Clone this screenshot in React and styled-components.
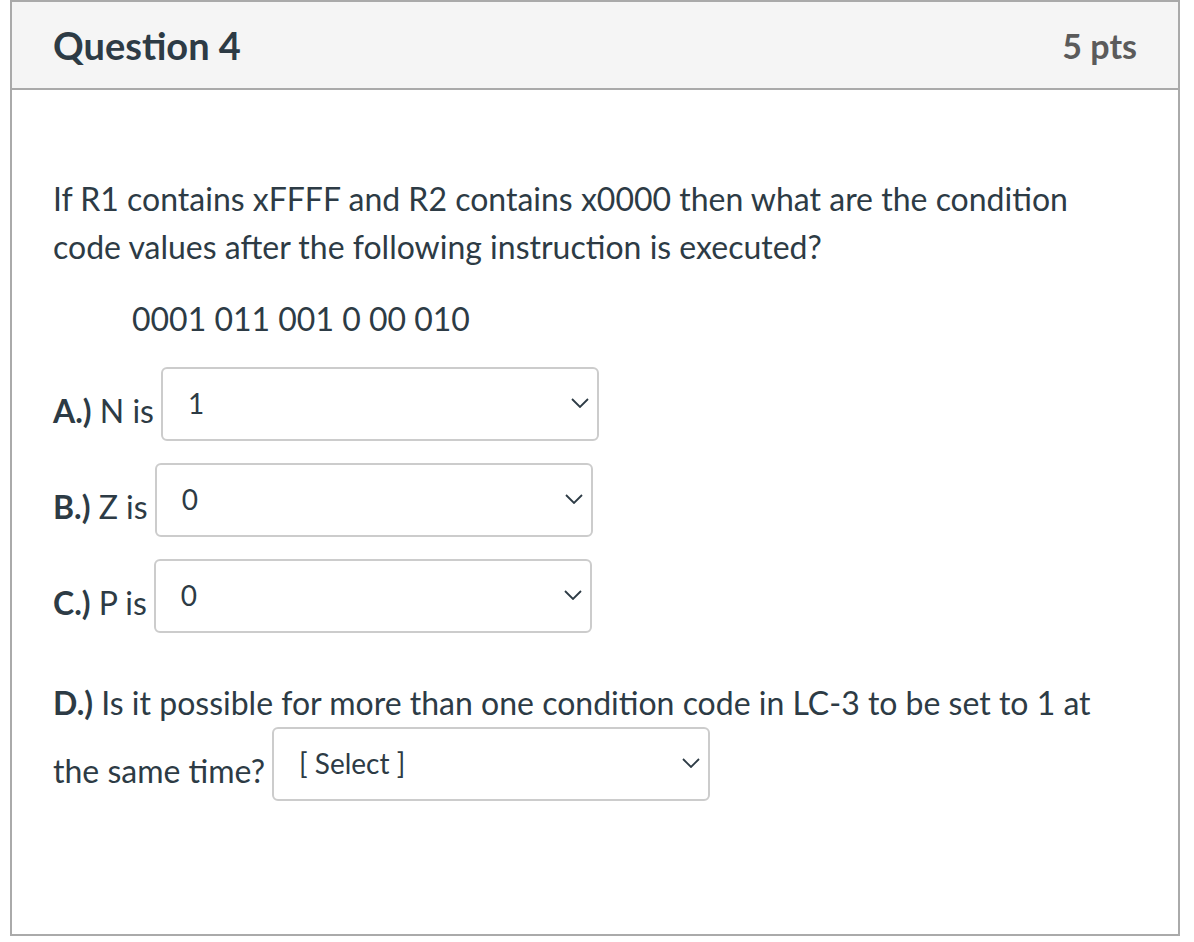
import React from "react";
import styled, { createGlobalStyle } from "styled-components";

const Global = createGlobalStyle`
  html, body { margin: 0; padding: 0; background: #ffffff; }
  body { font-family: Lato, "Open Sans", sans-serif; color: #2d3b45; }
  * { box-sizing: border-box; }
`;

const Card = styled.section`
  margin-left: 10px;
  width: 1170px;
  height: 936px;
  border: 2px solid #aaaaaa;
  background: #ffffff;
  display: flex;
  flex-direction: column;
`;

const Header = styled.header`
  height: 88px;
  background: #f5f5f5;
  border-bottom: 2px solid #aaaaaa;
  display: flex;
  align-items: center;
  justify-content: space-between;
  padding: 0 41px;
`;

const Title = styled.h2`
  margin: 0;
  font-family: Lato, sans-serif;
  font-weight: 700;
  font-size: 38px;
  color: #2d3b45;
`;

const Points = styled.span`
  font-family: Lato, sans-serif;
  font-weight: 700;
  font-size: 34px;
  color: #5b5b5b;
`;

const Body = styled.div`
  padding: 85px 41px 0;
  font-size: 32px;
  line-height: 48px;
`;

const Para = styled.p`
  margin: ${(p) => p.$mt || 0}px 0 0;
  padding-left: ${(p) => p.$indent || 0}px;
`;

const Row = styled.div`
  display: flex;
  align-items: center;
  gap: 7px;
  margin-top: ${(p) => p.$mt || 0}px;
  height: 74px;
`;

const Label = styled.span`
  padding-top: 14px;
  white-space: nowrap;
`;

const Strong = styled.strong`
  font-weight: 700;
`;

const Select = styled.div`
  width: 438px;
  height: 74px;
  border: 2px solid #cccccc;
  border-radius: 6px;
  display: flex;
  align-items: center;
  justify-content: space-between;
  padding: 0 8px 2px 25px;
  background: #ffffff;
`;

const Value = styled.span`
  font-size: 28px;
  line-height: 1;
  color: #2d3b45;
`;

const Chevron = () => (
  <svg width="18" height="10" viewBox="0 0 18 10" fill="none">
    <polyline points="1,1 9,9 17,1" stroke="#2d3b45" strokeWidth="1.8" />
  </svg>
);

const Dropdown = ({ value }) => (
  <Select>
    <Value>{value}</Value>
    <Chevron />
  </Select>
);

export default function App() {
  return (
    <>
      <Global />
      <Card>
        <Header>
          <Title>Question 4</Title>
          <Points>5 pts</Points>
        </Header>
        <Body>
          <Para>
            If R1 contains xFFFF and R2 contains x0000 then what are the condition code
            values after the following instruction is executed?
          </Para>
          <Para $mt={24} $indent={79}>0001 011 001 0 00 010</Para>
          <Row $mt={24}>
            <Label><Strong>A.)</Strong> N is</Label>
            <Dropdown value="1" />
          </Row>
          <Row $mt={22}>
            <Label><Strong>B.)</Strong> Z is</Label>
            <Dropdown value="0" />
          </Row>
          <Row $mt={22}>
            <Label><Strong>C.)</Strong> P is</Label>
            <Dropdown value="0" />
          </Row>
          <Para $mt={46}>
            <Strong>D.)</Strong> Is it possible for more than one condition code in LC-3 to be set to 1 at
          </Para>
          <Row>
            <Label>the same time?</Label>
            <Dropdown value="[ Select ]" />
          </Row>
        </Body>
      </Card>
    </>
  );
}
